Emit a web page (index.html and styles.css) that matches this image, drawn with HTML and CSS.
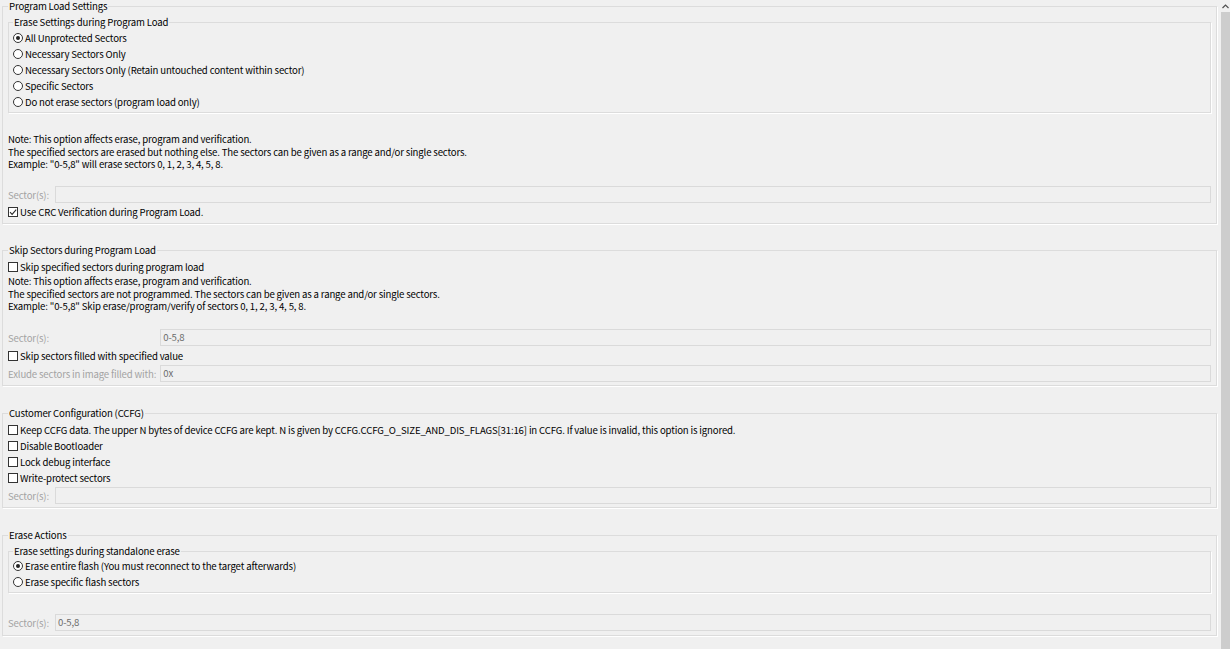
FILE: index.html
```html
<!DOCTYPE html>
<html lang="en">
<head>
<meta charset="utf-8">
<title>Program Load Settings</title>
<link rel="stylesheet" href="styles.css">
</head>
<body>
<div class="window">
  <main class="content">
    <fieldset class="group g1">
      <legend>Program Load Settings</legend>
      <fieldset class="subgroup">
        <legend>Erase Settings during Program Load</legend>
        <div class="opt"><span class="radio on"></span><span>All Unprotected Sectors</span></div>
        <div class="opt"><span class="radio"></span><span>Necessary Sectors Only</span></div>
        <div class="opt"><span class="radio"></span><span>Necessary Sectors Only (Retain untouched content within sector)</span></div>
        <div class="opt"><span class="radio"></span><span>Specific Sectors</span></div>
        <div class="opt"><span class="radio"></span><span>Do not erase sectors (program load only)</span></div>
      </fieldset>
      <div class="note note-g1">Note: This option affects erase, program and verification.<br>The specified sectors are erased but nothing else. The sectors can be given as a range and/or single sectors.<br>Example: "0-5,8" will erase sectors 0, 1, 2, 3, 4, 5, 8.</div>
      <div class="field f-g1"><span class="lbl">Sector(s):</span><span class="input"></span></div>
      <div class="opt check-row"><span class="check"><svg viewBox="0 0 10 10" width="10" height="10"><path d="M2 5.2 L4.1 7.4 L8.2 2.6" fill="none" stroke="#2b2b2b" stroke-width="1.1"/></svg></span><span>Use CRC Verification during Program Load.</span></div>
    </fieldset>

    <fieldset class="group g2">
      <legend>Skip Sectors during Program Load</legend>
      <div class="opt"><span class="check"></span><span>Skip specified sectors during program load</span></div>
      <div class="note">Note: This option affects erase, program and verification.<br>The specified sectors are not programmed. The sectors can be given as a range and/or single sectors.<br>Example: "0-5,8" Skip erase/program/verify of sectors 0, 1, 2, 3, 4, 5, 8.</div>
      <div class="form-grid">
        <span class="lbl">Sector(s):</span><span class="input">0-5,8</span>
        <div class="opt span gap-top"><span class="check"></span><span>Skip sectors filled with specified value</span></div>
        <span class="lbl gap-top1">Exlude sectors in image filled with:</span><span class="input gap-top1">0x</span>
      </div>
    </fieldset>

    <fieldset class="group g3">
      <legend>Customer Configuration (CCFG)</legend>
      <div class="opt"><span class="check"></span><span>Keep CCFG data. The upper N bytes of device CCFG are kept. N is given by CCFG.CCFG_O_SIZE_AND_DIS_FLAGS[31:16] in CCFG. If value is invalid, this option is ignored.</span></div>
      <div class="opt"><span class="check"></span><span>Disable Bootloader</span></div>
      <div class="opt"><span class="check"></span><span>Lock debug interface</span></div>
      <div class="opt"><span class="check"></span><span>Write-protect sectors</span></div>
      <div class="field f-g3"><span class="lbl">Sector(s):</span><span class="input"></span></div>
    </fieldset>

    <fieldset class="group g4">
      <legend>Erase Actions</legend>
      <fieldset class="subgroup sub-g4">
        <legend>Erase settings during standalone erase</legend>
        <div class="opt"><span class="radio on"></span><span>Erase entire flash (You must reconnect to the target afterwards)</span></div>
        <div class="opt"><span class="radio"></span><span>Erase specific flash sectors</span></div>
      </fieldset>
      <div class="field f-g4"><span class="lbl">Sector(s):</span><span class="input">0-5,8</span></div>
    </fieldset>
  </main>
  <div class="scrollbar">
    <div class="sb-arrow"><svg viewBox="0 0 7 5" width="7" height="5"><path d="M0.5 4 L3.5 1 L6.5 4" fill="none" stroke="#505050" stroke-width="1.2"/></svg></div>
    <div class="sb-thumb"></div>
  </div>
</div>
</body>
</html>
```

FILE: styles.css
```css
html, body {
  margin: 0;
  padding: 0;
}

body {
  background: #f0f0f0;
  font-family: "Noto Sans CJK SC", "Noto Sans", sans-serif;
  font-size: 9.6px;
  letter-spacing: -0.15px;
  color: #000;
}

.window {
  display: flex;
  height: 649px;
  overflow: hidden;
}

.content {
  flex: 1;
  min-width: 0;
  padding: 0 4px 0 2px;
}

/* group boxes */
.group {
  margin: 0 0 20px;
  padding: 3px 5px 3px;
  border: 1px solid #dcdcdc;
  box-shadow: 1px 1px 0 #ffffff;
  min-width: 0;
}

.g2 { padding-top: 2px; margin-bottom: 21px; }
.g3 { padding-top: 2px; margin-bottom: 21px; }
.g4 { padding-bottom: 4px; }

legend {
  padding: 0 1px;
  height: 13px;
  line-height: 13px;
  white-space: nowrap;
}

.subgroup {
  margin: 0;
  padding: 1px 4px 2px;
  border: 1px solid #dcdcdc;
  box-shadow: 1px 1px 0 #ffffff;
  min-width: 0;
}

.sub-g4 { padding-top: 0; }

/* option rows */
.opt {
  display: flex;
  align-items: center;
  gap: 2px;
  height: 16px;
  white-space: nowrap;
}

.check-row { margin-top: 1px; }

.radio {
  box-sizing: border-box;
  width: 10px;
  height: 10px;
  border: 1px solid #333;
  border-radius: 50%;
  background: #fff;
  display: flex;
  align-items: center;
  justify-content: center;
  flex: none;
}

.radio.on::after {
  content: "";
  width: 4px;
  height: 4px;
  border-radius: 50%;
  background: #222;
}

.check {
  box-sizing: border-box;
  width: 10px;
  height: 10px;
  border: 1px solid #333;
  background: #fff;
  flex: none;
  position: relative;
}

.check svg {
  position: absolute;
  left: -1px;
  top: -1px;
}

/* notes */
.note {
  height: 38px;
  line-height: 12.5px;
  white-space: nowrap;
}

.note-g1 {
  margin: 20px 0 15px;
}

.g2 .note {
  margin-bottom: 16px;
}

/* text fields */
.field {
  display: grid;
  grid-template-columns: auto 1fr;
  column-gap: 6px;
  align-items: center;
}

.f-g3 { margin-top: 1px; }
.f-g4 { margin-top: 21px; }

.form-grid {
  display: grid;
  grid-template-columns: auto 1fr;
  column-gap: 4px;
  align-items: center;
}

.form-grid .span {
  grid-column: 1 / -1;
}

.gap-top { margin-top: 2px; }
.gap-top1 { margin-top: 1px; }

.lbl {
  color: #a3a3a3;
  white-space: nowrap;
}

.input {
  box-sizing: border-box;
  height: 17px;
  border: 1px solid #dadada;
  background: #f0f0f0;
  color: #6d6d6d;
  padding: 0 2px;
  line-height: 15px;
}

/* scrollbar */
.scrollbar {
  width: 9px;
  display: flex;
  flex-direction: column;
  background: #f0f0f0;
}

.sb-arrow {
  height: 12px;
  display: flex;
  align-items: center;
  justify-content: center;
}

.sb-thumb {
  flex: 1;
  background: #cdcdcd;
}
```
